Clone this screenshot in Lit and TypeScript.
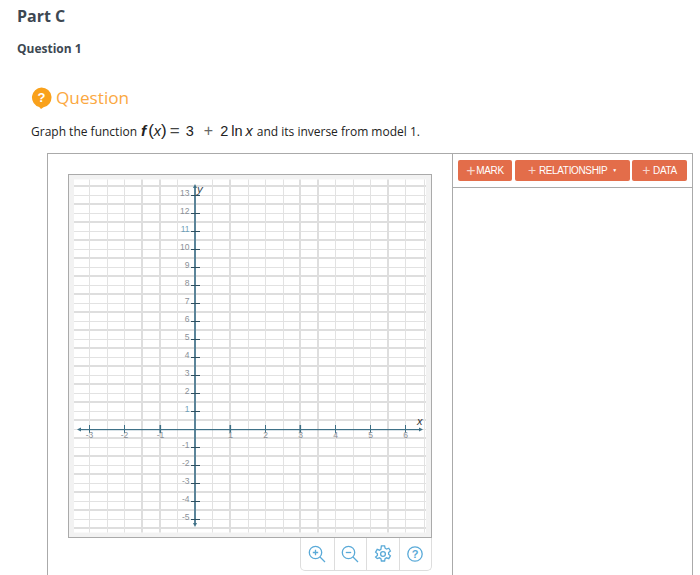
import { LitElement, html, css, svg } from "lit";
import { customElement } from "lit/decorators.js";

const VX = [89, 107, 124, 142, 160, 177, 212, 230, 248, 265, 283, 300, 318, 335, 353, 370, 388, 405, 424];
const THICK_X = new Set([142, 160, 230, 300, 318, 388]);
const X_TICKS: [number, string, boolean][] = [
  [89, "-3", false], [124, "-2", false], [160, "-1", true], [230, "1", true], [265, "2", false],
  [300, "3", true], [335, "4", false], [370, "5", false], [405, "6", false],
];
const Y_VALUES = [13, 12, 11, 10, 9, 8, 7, 6, 5, 4, 3, 2, 1, -1, -2, -3, -4, -5];
const yOf = (v: number) => 429.5 - v * 18;

@customElement("app-root")
export class AppRoot extends LitElement {
  static styles = css`
    :host { display: block; width: 700px; height: 575px; overflow: hidden; background: #fff; font-family: "Open Sans", sans-serif; color: #333; }
    .page { padding: 5px 8px 0 17px; display: flex; flex-direction: column; height: 570px; }
    h1 { margin: 0; font-size: 16px; line-height: 22px; font-weight: 700; color: #3d4852; }
    h2 { margin: 13px 0 0; font-size: 12px; line-height: 18px; font-weight: 700; color: #3d4852; }
    .qhead { display: flex; align-items: center; gap: 4px; margin: 28px 0 0 14px; height: 24px; }
    .qhead svg { display: block; flex: none; }
    .qhead span { font-size: 17.2px; line-height: 24px; color: #fba83f; }
    .prompt { margin: 10px 0 0 14px; font-size: 12px; line-height: 22px; height: 22px; color: #222; white-space: nowrap; display: flex; align-items: baseline; }
    .math { font-family: "Liberation Sans", sans-serif; font-size: 14.5px; color: #222; white-space: pre; margin: 0 4px 0 4px; display: inline-flex; align-items: baseline; }
    .math i { font-style: italic; }
    .math .f { font-size: 15.5px; font-weight: 700; margin-right: 2px; }
    .math .paren { font-size: 17px; font-weight: 400; }
    .math .eq { font-size: 17px; margin: 0 6px 0 3px; color: #444; }
    .math .plus { font-size: 16px; color: #666; margin: 0 7px 0 10px; }
    .math .ln { margin: 0 3px 0 3px; font-weight: 500; }
    .frame { flex: 1; margin: 11px 0 0 30px; display: flex; border: 1px solid #aaa; border-bottom: none; width: 646px; box-sizing: border-box; min-height: 0; }
    .left { width: 405px; flex: none; box-sizing: border-box; border-right: 1px solid #aaa; padding: 20px 0 0 20px; display: flex; flex-direction: column; }
    .plot { width: 364px; height: 364px; box-sizing: border-box; border: 1px solid #aaa; background: #f2f2f2; }
    .plot svg { display: block; margin: -1px; }
    .tools { display: flex; align-self: flex-end; margin-right: 20px; height: 33px; border: 1px solid #ddd; border-top: none; border-radius: 0 0 5px 5px; box-sizing: border-box; }
    .tool { width: 32.5px; display: flex; align-items: center; justify-content: center; border-left: 1px solid #ddd; padding: 0; background: none; border-top: 0; border-right: 0; border-bottom: 0; }
    .tool:first-child { border-left: none; }
    .tool svg { display: block; }
    .right { flex: 1; display: flex; flex-direction: column; }
    .bar { box-sizing: border-box; border-bottom: 1px solid #aaa; padding: 6px 5px 0 5px; display: flex; gap: 3px; flex: none; height: 34px; }
    .btn { height: 21px; background: #e36d4a; color: #fff; border: none; border-radius: 2px; font-family: "Liberation Sans", sans-serif; font-size: 10px; line-height: 21px; padding: 0; display: flex; align-items: center; justify-content: center; letter-spacing: -0.35px; white-space: nowrap; }
    .btn .p { font-size: 14px; margin-right: 2px; color: #f7d5cb; line-height: 21px; }
    .mark { width: 54px; }
    .mark .p { font-size: 16px; margin-right: 1px; }
    .rel { width: 115px; }
    .rel .p { margin-right: 3px; }
    .data { width: 55px; margin-left: -1px; }
    .data .p { margin-right: 3px; }
    .caret { font-size: 5px; margin-left: 5px; }
  `;

  private plot() {
    const gridH: unknown[] = [];
    for (let y = 186; y <= 528; y += 18) gridH.push(svg`<rect x="74" y="${y - 1}" width="352" height="2" fill="#dedede"></rect>`);
    for (const v of [...Y_VALUES, 0]) gridH.push(svg`<rect x="74" y="${Math.floor(yOf(v))}" width="352" height="1" fill="#e2e2e2"></rect>`);
    const gridV = VX.map((x) => THICK_X.has(x)
      ? svg`<rect x="${x - 1}" y="179.5" width="2" height="353" fill="#dedede"></rect>`
      : svg`<rect x="${x}" y="179.5" width="1" height="353" fill="#e2e2e2"></rect>`);
    const axis = "#3f7187";
    const label = "#8a8f96";
    return html`<svg width="364" height="364" viewBox="68 174 364 364" font-family="Liberation Sans, sans-serif">
      <rect x="74" y="179.5" width="352" height="353" fill="#fff"></rect>
      ${gridH}${gridV}
      <rect x="194" y="186" width="2" height="337" fill="#5b8499"></rect>
      <path d="M195 184l-2 4h4zM195 527l-2-4h4z" fill="${axis}"></path>
      <rect x="80" y="429" width="340" height="1.2" fill="${axis}"></rect>
      <path d="M77 429.500l4-2v4zM423 429.500l-4-2v4z" fill="${axis}"></path>
      ${X_TICKS.map(([x, t, thick]) => svg`
        <rect x="${x - (thick ? 0.5 : 0)}" y="425" width="${thick ? 1.6 : 1}" height="8" fill="${axis}"></rect>
        <text x="${x + 0.5}" y="438" font-size="8.5" fill="${label}" text-anchor="middle">${t}</text>`)}
      ${Y_VALUES.map((v) => svg`
        <rect x="191" y="${yOf(v) - 0.5}" width="9" height="1" fill="#2f4f5f"></rect>
        <text x="189.500" y="${yOf(v)}" font-size="8.500" fill="${v === 11 || v === 1 ? "#6d9fb8" : label}" text-anchor="end">${v}</text>`)}
      <text x="197" y="193" font-size="11.5" font-style="italic" fill="#3b4a54">y</text>
      <text x="417" y="425" font-size="11" font-style="italic" fill="#333">x</text>
    </svg>`;
  }

  private icon(kind: string) {
    const c = "#5aaad8";
    const s = `fill:none;stroke:${c};stroke-width:1.3`;
    if (kind === "in" || kind === "out") {
      return html`<svg width="18" height="18" viewBox="0 0 18 18">
        <circle cx="7.5" cy="7.5" r="6.2" style="${s}"></circle>
        <path d="M12 12l5 5" style="${s}"></path>
        <path d="${kind === "in" ? "M4.8 7.5h5.4M7.5 4.8v5.4" : "M4.8 7.5h5.4"}" style="${s}"></path>
      </svg>`;
    }
    if (kind === "gear") {
      return html`<svg width="18" height="18" viewBox="0 0 18 18">
        <path d="M7.4 1h3.2l.5 2.4 1.4.8 2.3-.8 1.6 2.8-1.8 1.6v1.6l1.8 1.6-1.6 2.8-2.3-.8-1.4.8-.5 2.4H7.4l-.5-2.4-1.4-.8-2.3.8L1.600 12.200l1.800-1.600V9l-1.800-1.600 1.600-2.800 2.300.8 1.400-.8z" transform="translate(0 -.2)" style="${s}"></path>
        <circle cx="9" cy="9" r="2.4" style="${s}"></circle>
      </svg>`;
    }
    return html`<svg width="16" height="16" viewBox="0 0 16 16">
      <circle cx="8" cy="8" r="7.2" style="${s}"></circle>
      <text x="8" y="12" font-size="11" font-weight="700" text-anchor="middle" fill="${c}" font-family="Liberation Sans, sans-serif">?</text>
    </svg>`;
  }

  render() {
    return html`<div class="page">
      <h1>Part C</h1>
      <h2>Question 1</h2>
      <div class="qhead">
        <svg width="21" height="22" viewBox="0 0 21 22">
          <path d="M10.500 0.500a10 10 0 0 1 2 19.800L10 22l-1.800-1.900A10 10 0 0 1 10.500 .5z" fill="#f9a11b"></path>
          <text x="10.500" y="15" font-size="13" font-weight="700" fill="#fff" text-anchor="middle" font-family="Liberation Sans, sans-serif">?</text>
        </svg>
        <span>Question</span>
      </div>
      <div class="prompt">Graph the function<span class="math"><i class="f">f</i><span class="paren">(</span><i>x</i><span class="paren">)</span><span class="eq">=</span>3<span class="plus">+</span>2<span class="ln">ln</span><i>x</i></span>and its inverse from model 1.</div>
      <div class="frame">
        <div class="left">
          <div class="plot">${this.plot()}</div>
          <div class="tools">
            <button class="tool">${this.icon("in")}</button>
            <button class="tool">${this.icon("out")}</button>
            <button class="tool">${this.icon("gear")}</button>
            <button class="tool">${this.icon("help")}</button>
          </div>
        </div>
        <div class="right">
          <div class="bar">
            <button class="btn mark"><span class="p">+</span>MARK</button>
            <button class="btn rel"><span class="p">+</span>RELATIONSHIP<span class="caret">▼</span></button>
            <button class="btn data"><span class="p">+</span>DATA</button>
          </div>
        </div>
      </div>
    </div>`;
  }
}
